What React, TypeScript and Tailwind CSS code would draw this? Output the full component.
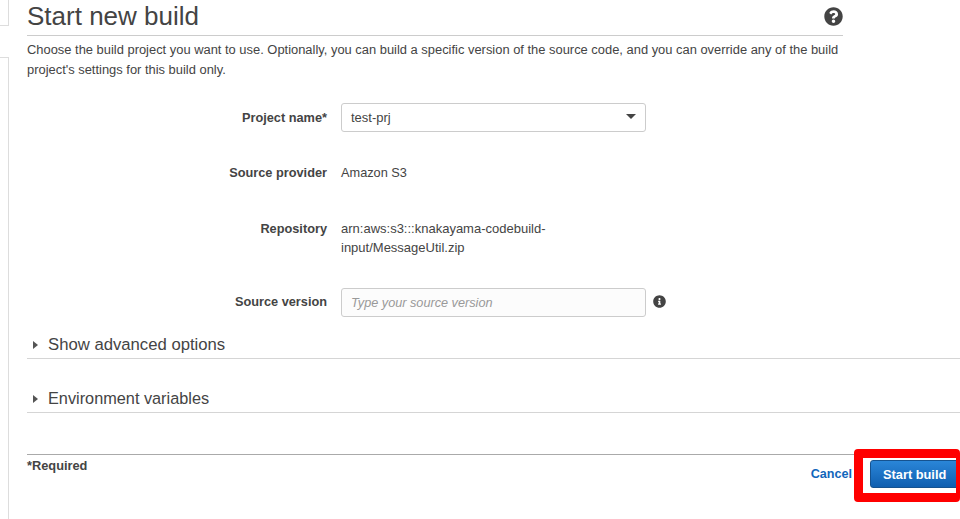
import { FaQuestionCircle, FaInfoCircle } from 'react-icons/fa';

function Row({ label, className, labelClass = '', children }: { label: string; className: string; labelClass?: string; children: React.ReactNode }) {
    return (
        <div className={`flex w-[816px] ${className}`}>
            <div className={`w-[300px] text-right font-bold text-[12.75px] leading-[20px] text-[#444] ${labelClass}`}>{label}</div>
            <div className="ml-[14px] flex-1">{children}</div>
        </div>
    );
}

function Section({ label, className, textClass }: { label: string; className: string; textClass: string }) {
    return (
        <div className={`flex items-center h-[28px] border-b border-[#d5d5d5] ${className}`}>
            <svg width="5" height="8" viewBox="0 0 5 8" className="ml-[6px] mr-[10px]">
                <path d="M0 0 L5 4 L0 8 Z" fill="#555" />
            </svg>
            <span className={`text-[#444] ${textClass}`}>{label}</span>
        </div>
    );
}

export default function App() {
    return (
        <div className="flex h-[519px] w-[960px] overflow-hidden bg-white text-[#444] font-['Liberation_Sans',Arial,sans-serif]">
            <div className="flex w-[9px] shrink-0 flex-col">
                <div className="h-[26px] border-r border-b border-[#ddd]" />
                <div className="mt-[31px] flex-1 border-t border-r border-[#ddd]" />
            </div>
            <div className="ml-[18px] flex-1 min-w-0">
                <div className="flex h-[36px] w-[816px] justify-between border-b border-[#ccc]">
                    <h1 className="text-[26px] leading-[32px] text-[#444]">Start new build</h1>
                    <FaQuestionCircle className="mt-[7px] text-[19px] text-[#444]" />
                </div>
                <p className="mt-[4px] w-[816px] text-[12.92px] leading-[20px] text-[#444]">
                    Choose the build project you want to use. Optionally, you can build a specific version of the source code, and you can override any of the build project's settings for this build only.
                </p>
                <Row label="Project name*" className="mt-[23px] items-center">
                    <div className="flex h-[29px] w-[305px] items-center justify-between rounded-[3px] border border-[#ccc] pl-[9px] pr-[9px]">
                        <span className="text-[13px] text-[#444]">test-prj</span>
                        <svg width="10" height="5" viewBox="0 0 10 5" className="mb-[2px]">
                            <path d="M0 0 H10 L5 5 Z" fill="#444" />
                        </svg>
                    </div>
                </Row>
                <Row label="Source provider" className="mt-[31px]">
                    <div className="text-[12.75px] leading-[20px]">Amazon S3</div>
                </Row>
                <Row label="Repository" className="mt-[36px]">
                    <div className="w-[240px] text-[13px] leading-[19px]">arn:aws:s3:::knakayama-codebuild-input/MessageUtil.zip</div>
                </Row>
                <Row label="Source version" className="mt-[31px] items-center" labelClass="pb-[2px]">
                    <div className="flex items-center">
                        <div className="flex h-[29px] w-[305px] items-center rounded-[3px] border border-[#ccc] bg-[#fcfcfc] pl-[9px] pt-[2px]">
                            <span className="text-[12.7px] italic text-[#999]">Type your source version</span>
                        </div>
                        <FaInfoCircle className="ml-[7px] mb-[3px] text-[13px] text-[#444]" />
                    </div>
                </Row>
                <Section label="Show advanced options" className="mt-[14px]" textClass="text-[16.7px]" />
                <Section label="Environment variables" className="mt-[26px]" textClass="text-[16.3px]" />
                <div className="mt-[41px] flex items-start">
                    <div className="flex h-[40px] flex-1 justify-between border-t border-[#aaa] pt-[4px]">
                        <span className="text-[12.8px] leading-[14px] font-bold text-[#444]">*Required</span>
                        <a className="mt-[6px] mr-[2px] text-[12.6px] font-bold text-[#1166bb]">Cancel</a>
                    </div>
                    <div className="-mt-[5px] h-[53px] w-[106px] shrink-0 rounded-[4px] border-t-[9px] border-b-[9px] border-l-[9px] border-r-[4px] border-[#f00] bg-white pl-[7px] pt-[2px] overflow-hidden">
                        <button className="h-[28px] w-[92px] rounded-l-[3px] border border-[#15528f] bg-gradient-to-b from-[#2a86d8] to-[#0f5fb0] text-left pl-[12px] pt-[2px] text-[12.8px] font-bold text-white">
                            Start build
                        </button>
                    </div>
                </div>
            </div>
        </div>
    );
}
